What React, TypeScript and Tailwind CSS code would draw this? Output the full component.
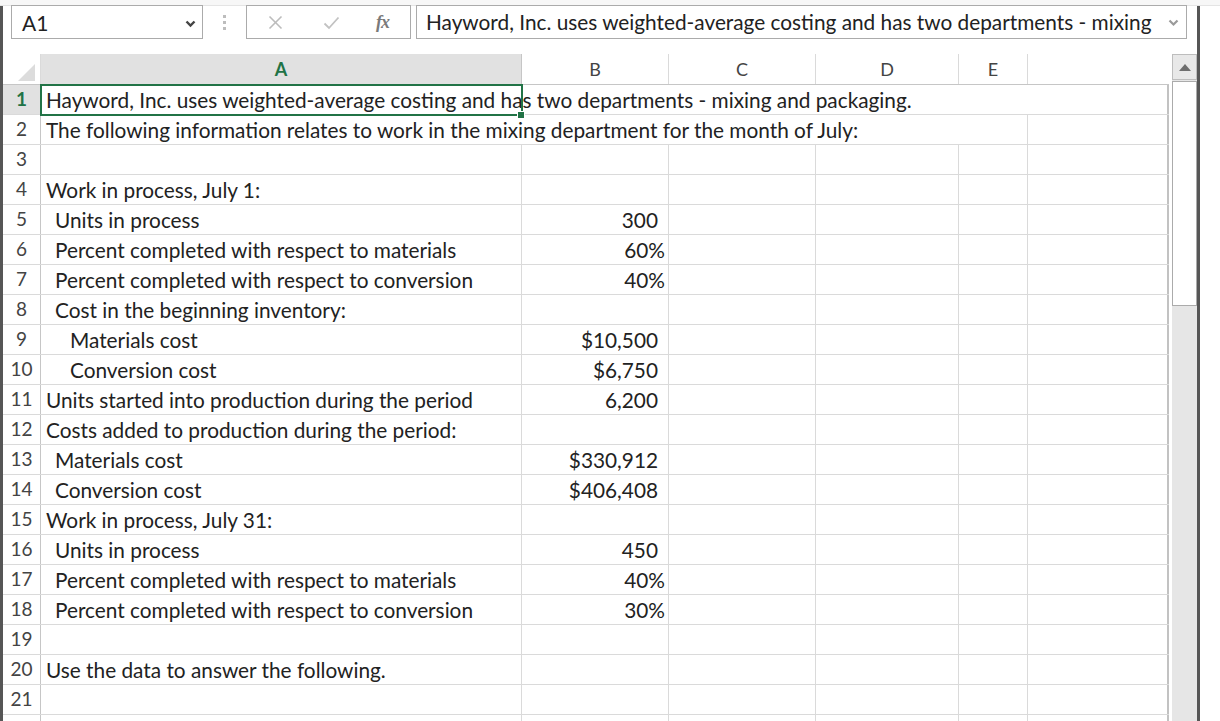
import React from "react";

type Row = { a?: string; indent?: 0 | 1 | 2; b?: string; pct?: boolean; noNum?: boolean };

const rows: Row[] = [
  { a: "Hayword, Inc. uses weighted-average costing and has two departments - mixing and packaging." },
  { a: "The following information relates to work in the mixing department for the month of July:" },
  {},
  { a: "Work in process, July 1:" },
  { a: "Units in process", indent: 1, b: "300" },
  { a: "Percent completed with respect to materials", indent: 1, b: "60%", pct: true },
  { a: "Percent completed with respect to conversion", indent: 1, b: "40%", pct: true },
  { a: "Cost in the beginning inventory:", indent: 1 },
  { a: "Materials cost", indent: 2, b: "$10,500" },
  { a: "Conversion cost", indent: 2, b: "$6,750" },
  { a: "Units started into production during the period", b: "6,200" },
  { a: "Costs added to production during the period:" },
  { a: "Materials cost", indent: 1, b: "$330,912" },
  { a: "Conversion cost", indent: 1, b: "$406,408" },
  { a: "Work in process, July 31:" },
  { a: "Units in process", indent: 1, b: "450" },
  { a: "Percent completed with respect to materials", indent: 1, b: "40%", pct: true },
  { a: "Percent completed with respect to conversion", indent: 1, b: "30%", pct: true },
  {},
  { a: "Use the data to answer the following." },
  {},
  { noNum: true },
];

const indentCls = ["pl-[5px]", "pl-[14px]", "pl-[29px]"];

function GridRow({ r, i }: { r: Row; i: number }) {
  const n = i + 1;
  const sel = n === 1;
  const hideAll = n === 1;
  const hideABCD = n === 2;
  const line = "border-r border-[#dadada]";
  return (
    <div className="flex h-[30px] shrink-0 border-b border-[#dadada]">
      <div
        className={`w-[38px] shrink-0 border-r border-[#c6c6c6] flex items-center justify-center text-[19px] ${
          sel ? "bg-[#e1e1e1] text-[#217346] font-bold" : "text-[#444]"
        }`}
      >
        {r.noNum ? "" : n}
      </div>
      <div
        className={`w-[481px] shrink-0 flex items-center whitespace-nowrap overflow-visible text-[20.8px] text-[#222] relative z-10 ${
          indentCls[r.indent ?? 0]
        } ${hideAll || hideABCD ? "" : line}`}
      >
        {r.a}
      </div>
      <div
        className={`w-[147px] shrink-0 flex items-center justify-end text-[20.8px] text-[#222] ${
          r.pct ? "pr-[3px]" : "pr-[10px]"
        } ${hideAll || hideABCD ? "" : line}`}
      >
        {r.b}
      </div>
      <div className={`w-[147px] shrink-0 ${hideAll || hideABCD ? "" : line}`} />
      <div className={`w-[143px] shrink-0 ${hideAll || hideABCD ? "" : line}`} />
      <div className={`w-[69px] shrink-0 ${hideAll ? "" : line}`} />
      <div className="w-[141px] shrink-0 border-r-2 border-[#c2c2c2]" />
    </div>
  );
}

export default function App() {
  return (
    <div className="w-[1220px] h-[721px] overflow-hidden bg-white font-['Lato',sans-serif] flex flex-col select-none">
      {/* top strip */}
      <div className="h-[6px] shrink-0 bg-[#f7f7f7] border-b border-[#e4e4e4]" />
      <div className="flex flex-1 min-h-0">
        {/* left dark bar */}
        <div className="w-[3px] shrink-0 bg-[#565656]" />
        {/* main content */}
        <div className="w-[1194px] shrink-0 flex flex-col min-h-0">
          {/* formula bar */}
          <div className="h-[34px] shrink-0 flex items-stretch mt-[-1px]">
            <div className="ml-[8px] w-[192px] border border-[#ababab] bg-white flex items-center justify-between pl-[10px] pr-[6px]">
              <span className="text-[21px] text-[#222] leading-none">A1</span>
              <svg width="11" height="8" viewBox="0 0 11 8" className="mt-[4px]">
                <polyline points="1.5,1.5 5.5,5.5 9.5,1.5" fill="none" stroke="#444" strokeWidth="2.4" />
              </svg>
            </div>
            <div className="w-[43px] flex flex-col items-center justify-center gap-[3px] pt-[1px]">
              <div className="w-[3px] h-[3px] bg-[#bdbdbd]" />
              <div className="w-[3px] h-[3px] bg-[#bdbdbd]" />
              <div className="w-[3px] h-[3px] bg-[#bdbdbd]" />
            </div>
            <div className="w-[165px] border border-[#ababab] bg-white flex items-center pl-[21px]">
              <svg width="15" height="15" viewBox="0 0 15 15">
                <line x1="1.5" y1="1.5" x2="13.5" y2="13.5" stroke="#bcbcbc" strokeWidth="1.6" />
                <line x1="13.5" y1="1.5" x2="1.5" y2="13.5" stroke="#bcbcbc" strokeWidth="1.6" />
              </svg>
              <svg width="17" height="14" viewBox="0 0 17 14" className="ml-[40px] mt-[2px]">
                <polyline points="1.5,7.5 6,12 15.5,1.5" fill="none" stroke="#c2c2c2" strokeWidth="1.8" />
              </svg>
              <span className="ml-[36px] text-[18px] italic font-bold text-[#7a7a7a] font-['Liberation_Serif',serif] leading-none tracking-[-1px]">
                fx
              </span>
            </div>
            <div className="ml-[5px] w-[771px] border border-[#ababab] bg-white flex items-center justify-between pl-[9px] pr-[7px]">
              <span className="text-[20.8px] text-[#222] whitespace-nowrap leading-none">
                Hayword, Inc. uses weighted-average costing and has two departments - mixing
              </span>
              <svg width="11" height="8" viewBox="0 0 11 8" className="mt-[2px]">
                <polyline points="1.5,1.5 5.5,5.5 9.5,1.5" fill="none" stroke="#9a9a9a" strokeWidth="2.2" />
              </svg>
            </div>
          </div>
          <div className="h-[15px] shrink-0" />
          {/* grid + scrollbar */}
          <div className="flex flex-1 min-h-0">
            <div className="w-[1166px] shrink-0 flex flex-col min-h-0 overflow-hidden relative">
              {/* header row */}
              <div className="flex h-[31px] shrink-0 border-b border-[#c6c6c6] text-[18px] text-[#444]">
                <div className="w-[38px] shrink-0 border-r border-[#dadada] flex items-end justify-end pr-[5px] pb-[3px]">
                  <svg width="17" height="17" viewBox="0 0 17 17">
                    <polygon points="17,0 17,17 0,17" fill="#dcdcdc" />
                  </svg>
                </div>
                <div className="w-[481px] shrink-0 bg-[#e1e1e1] border-r border-[#c6c6c6] flex items-center justify-center text-[#217346] font-bold">
                  A
                </div>
                <div className="w-[147px] shrink-0 border-r border-[#dadada] flex items-center justify-center">B</div>
                <div className="w-[147px] shrink-0 border-r border-[#dadada] flex items-center justify-center">C</div>
                <div className="w-[143px] shrink-0 border-r border-[#dadada] flex items-center justify-center">D</div>
                <div className="w-[69px] shrink-0 border-r border-[#dadada] flex items-center justify-center">E</div>
                <div className="w-[141px] shrink-0" />
              </div>
              {rows.map((r, i) => (
                <GridRow key={i} r={r} i={i} />
              ))}
              {/* selection */}
              <div className="absolute left-[37px] top-[30px] w-[483px] h-[32px] border-2 border-[#217346] z-20 pointer-events-none" />
              <div className="absolute left-[514px] top-[57px] w-[8px] h-[8px] bg-[#217346] border border-white z-30" />
            </div>
            <div className="w-[3px] shrink-0" />
            {/* scrollbar */}
            <div className="w-[25px] shrink-0 flex flex-col bg-[#e6e6e6]">
              <div className="h-[26px] shrink-0 border border-[#bdbdbd] bg-[#e8e8e8] flex items-center justify-center">
                <svg width="12" height="7" viewBox="0 0 12 7">
                  <polygon points="6,0 12,7 0,7" fill="#6e6e6e" />
                </svg>
              </div>
              <div className="h-[225px] shrink-0 mt-[1px] border border-[#ababab] bg-white" />
            </div>
          </div>
        </div>
        {/* right dark bar */}
        <div className="w-[3px] shrink-0 bg-[#565656]" />
        <div className="flex-1 bg-white" />
      </div>
    </div>
  );
}
